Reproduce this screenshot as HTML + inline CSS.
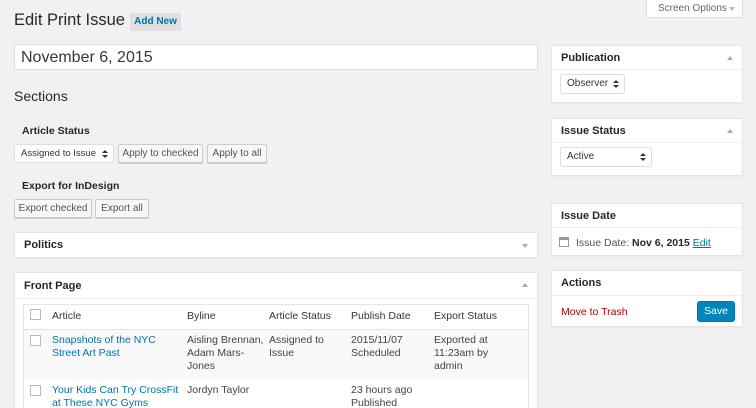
<!DOCTYPE html>
<html style="width:756px;height:408px;overflow:hidden"><head><meta charset="utf-8"><style>
*{box-sizing:border-box;margin:0;padding:0}
body{width:756px;height:408px;overflow:hidden;background:#f1f1f1;font-family:"Liberation Sans",sans-serif;color:#444;font-size:11px;position:relative}
.a{position:absolute}
.box{position:absolute;background:#fff;border:1px solid #e5e5e5;box-shadow:0 1px 1px rgba(0,0,0,.04)}
.hd{position:absolute;left:0;right:0;top:0;border-bottom:1px solid #eee;font-weight:bold;font-size:11px;color:#23282d;padding-left:9px}
.btn{position:absolute;background:#f7f7f7;border:1px solid #ccc;border-radius:2px;color:#555;font-size:10px;text-align:center;line-height:18px;box-shadow:0 1px 0 #ccc}
.sel{position:absolute;background:#fff;border:1px solid #ddd;border-radius:3px;font-size:10px;color:#333;padding-left:6px;line-height:18px}
.sel:after{content:"";position:absolute;right:5px;top:5px;border:3px solid transparent;border-bottom:3px solid #333;border-top:none}
.sel:before{content:"";position:absolute;right:5px;top:10px;border:3px solid transparent;border-top:3px solid #333;border-bottom:none}
.tri{position:absolute;right:9px;width:0;height:0;border-left:3px solid transparent;border-right:3px solid transparent}
.up{border-bottom:4px solid #aaa}.dn{border-top:4px solid #aaa}
.cb{position:absolute;width:11px;height:11px;border:1px solid #bbb;background:#fff}
.lnk{color:#0073aa}
.t{position:absolute;font-size:10.5px;line-height:13px}
</style></head><body>
<div class="a" style="left:646px;top:-1px;width:97px;height:19px;background:#fff;border:1px solid #ddd;font-size:10px;color:#666;line-height:17px;padding-left:11px">Screen Options</div>
<div class="tri dn a" style="left:729px;top:7px;right:auto;border-top-color:#bbb"></div>

<div class="a" style="left:14px;top:11px;font-size:16.5px;color:#23282d">Edit Print Issue</div>
<div class="a" style="left:130px;top:13px;width:51px;height:18px;background:#e0e0e0;color:#0073aa;font-weight:bold;font-size:10px;text-align:center;line-height:18px">Add New</div>

<div class="a" style="left:14px;top:44px;width:524px;height:26px;background:#fff;border:1px solid #ddd;font-size:16px;color:#32373c;padding-left:6px;line-height:25px">November 6, 2015</div>
<div class="a" style="left:14px;top:88px;font-size:14px;color:#23282d">Sections</div>

<div class="a" style="left:22px;top:125px;font-weight:bold;font-size:10.5px;color:#23282d">Article Status</div>
<div class="sel" style="left:14px;top:144px;width:100px;height:19px;font-size:9.5px">Assigned to Issue</div>
<div class="btn" style="left:118px;top:144px;width:85px;height:19px">Apply to checked</div>
<div class="btn" style="left:207px;top:144px;width:60px;height:19px">Apply to all</div>

<div class="a" style="left:22px;top:180px;font-weight:bold;font-size:10.5px;color:#23282d">Export for InDesign</div>
<div class="btn" style="left:14px;top:199px;width:78px;height:19px">Export checked</div>
<div class="btn" style="left:95px;top:199px;width:54px;height:19px">Export all</div>

<div class="box" style="left:14px;top:232px;width:524px;height:26px"><div class="hd" style="border:none;line-height:25px">Politics</div><div class="tri dn" style="top:11px"></div></div>

<div class="box" style="left:14px;top:272px;width:524px;height:150px">
 <div class="hd" style="height:26px;line-height:26px">Front Page</div><div class="tri up" style="top:10px"></div>
 <div class="a" style="left:8px;top:31px;width:506px;height:120px;border:1px solid #e5e5e5;background:#fff">
  <div class="a" style="left:0;top:0;right:0;height:25px;border-bottom:1px solid #e1e1e1"></div>
  <div class="a" style="left:0;top:25px;right:0;height:50px;background:#f9f9f9"></div>
 </div>
</div>
<div class="cb" style="left:30px;top:309px"></div>
<div class="t" style="left:52px;top:310px;color:#32373c">Article</div>
<div class="t" style="left:187px;top:310px;color:#32373c">Byline</div>
<div class="t" style="left:269px;top:310px;color:#32373c">Article Status</div>
<div class="t" style="left:351px;top:310px;color:#32373c">Publish Date</div>
<div class="t" style="left:434px;top:310px;color:#32373c">Export Status</div>

<div class="cb" style="left:30px;top:335px"></div>
<div class="t lnk" style="left:52px;top:334px;width:134px">Snapshots of the NYC Street Art Past</div>
<div class="t" style="left:187px;top:334px;width:80px">Aisling Brennan, Adam Mars-Jones</div>
<div class="t" style="left:269px;top:334px;width:75px">Assigned to Issue</div>
<div class="t" style="left:351px;top:334px;width:75px">2015/11/07 Scheduled</div>
<div class="t" style="left:434px;top:334px;width:70px">Exported at 11:23am by admin</div>

<div class="cb" style="left:30px;top:385px"></div>
<div class="t lnk" style="left:52px;top:384px;width:134px">Your Kids Can Try CrossFit at These NYC Gyms</div>
<div class="t" style="left:187px;top:384px">Jordyn Taylor</div>
<div class="t" style="left:351px;top:384px;width:75px">23 hours ago Published</div>

<div class="box" style="left:551px;top:45px;width:192px;height:58px"><div class="hd" style="height:24px;line-height:24px">Publication</div><div class="tri up" style="top:10px"></div></div>
<div class="sel" style="left:560px;top:74px;width:65px;height:20px">Observer</div>

<div class="box" style="left:551px;top:118px;width:192px;height:58px"><div class="hd" style="height:24px;line-height:24px">Issue Status</div><div class="tri up" style="top:10px"></div></div>
<div class="sel" style="left:560px;top:147px;width:92px;height:20px">Active</div>

<div class="box" style="left:551px;top:203px;width:192px;height:53px"><div class="hd" style="height:24px;line-height:24px">Issue Date</div>
 <div class="a" style="left:7px;top:33px;width:10px;height:10px;border:1px solid #999;border-top:3px solid #999"></div>
 <div class="a" style="left:24px;top:33px;font-size:10.5px;color:#555">Issue Date: <b style="color:#23282d">Nov 6, 2015</b> <span class="lnk" style="text-decoration:underline">Edit</span></div>
</div>

<div class="box" style="left:551px;top:270px;width:192px;height:57px"><div class="hd" style="height:25px;line-height:25px">Actions</div>
 <div class="a" style="left:9px;top:35px;font-size:10.5px;color:#a00">Move to Trash</div>
</div>
<div class="a" style="left:697px;top:301px;width:38px;height:21px;background:#0085ba;border:1px solid #0073aa;border-radius:3px;color:#fff;font-size:10.5px;text-align:center;line-height:19px">Save</div>
</body></html>
